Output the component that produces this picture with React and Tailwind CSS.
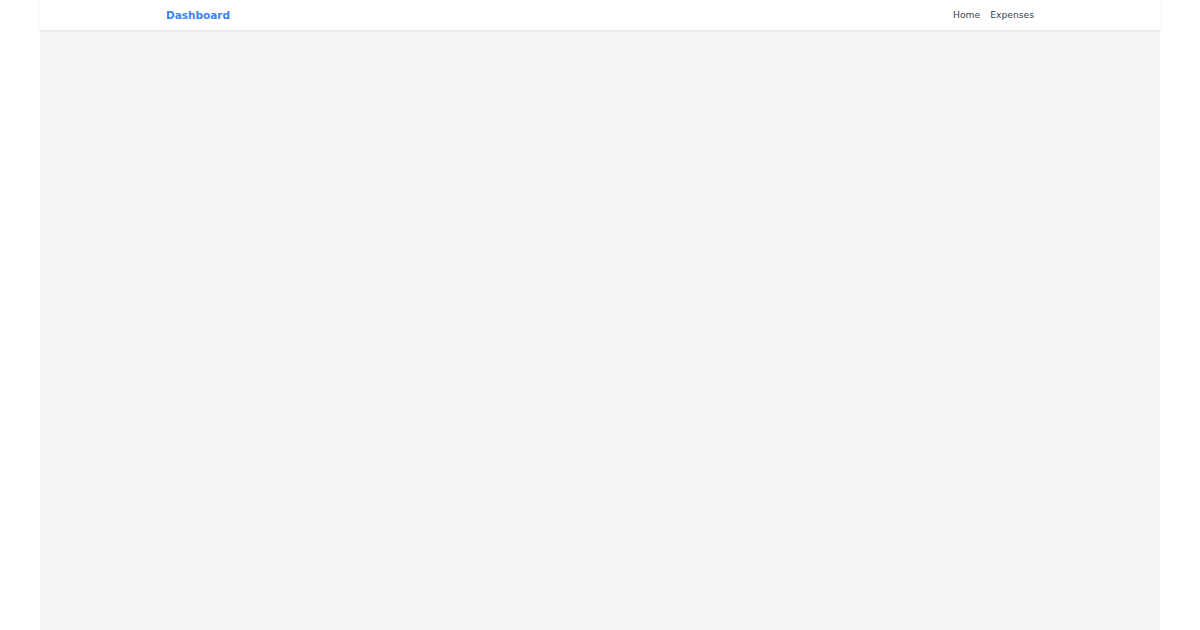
export default function App() {
  return (
    <div className="min-h-screen bg-white px-[40px]" style={{ fontFamily: '"DejaVu Sans", sans-serif' }}>
      <div className="min-h-[630px] bg-gray-100">
        <header className="bg-white h-[30px] shadow-[0_1px_2px_rgba(0,0,0,0.08)]">
          <nav className="max-w-[900px] mx-auto px-4 h-full flex items-center justify-between">
            <a href="#" className="pt-px text-[10.5px] font-bold text-[#3b82f6]">Dashboard</a>
            <div className="flex items-center gap-[10px] text-[9.2px] text-[#374151]">
              <a href="#">Home</a>
              <a href="#">Expenses</a>
            </div>
          </nav>
        </header>
      </div>
    </div>
  )
}
